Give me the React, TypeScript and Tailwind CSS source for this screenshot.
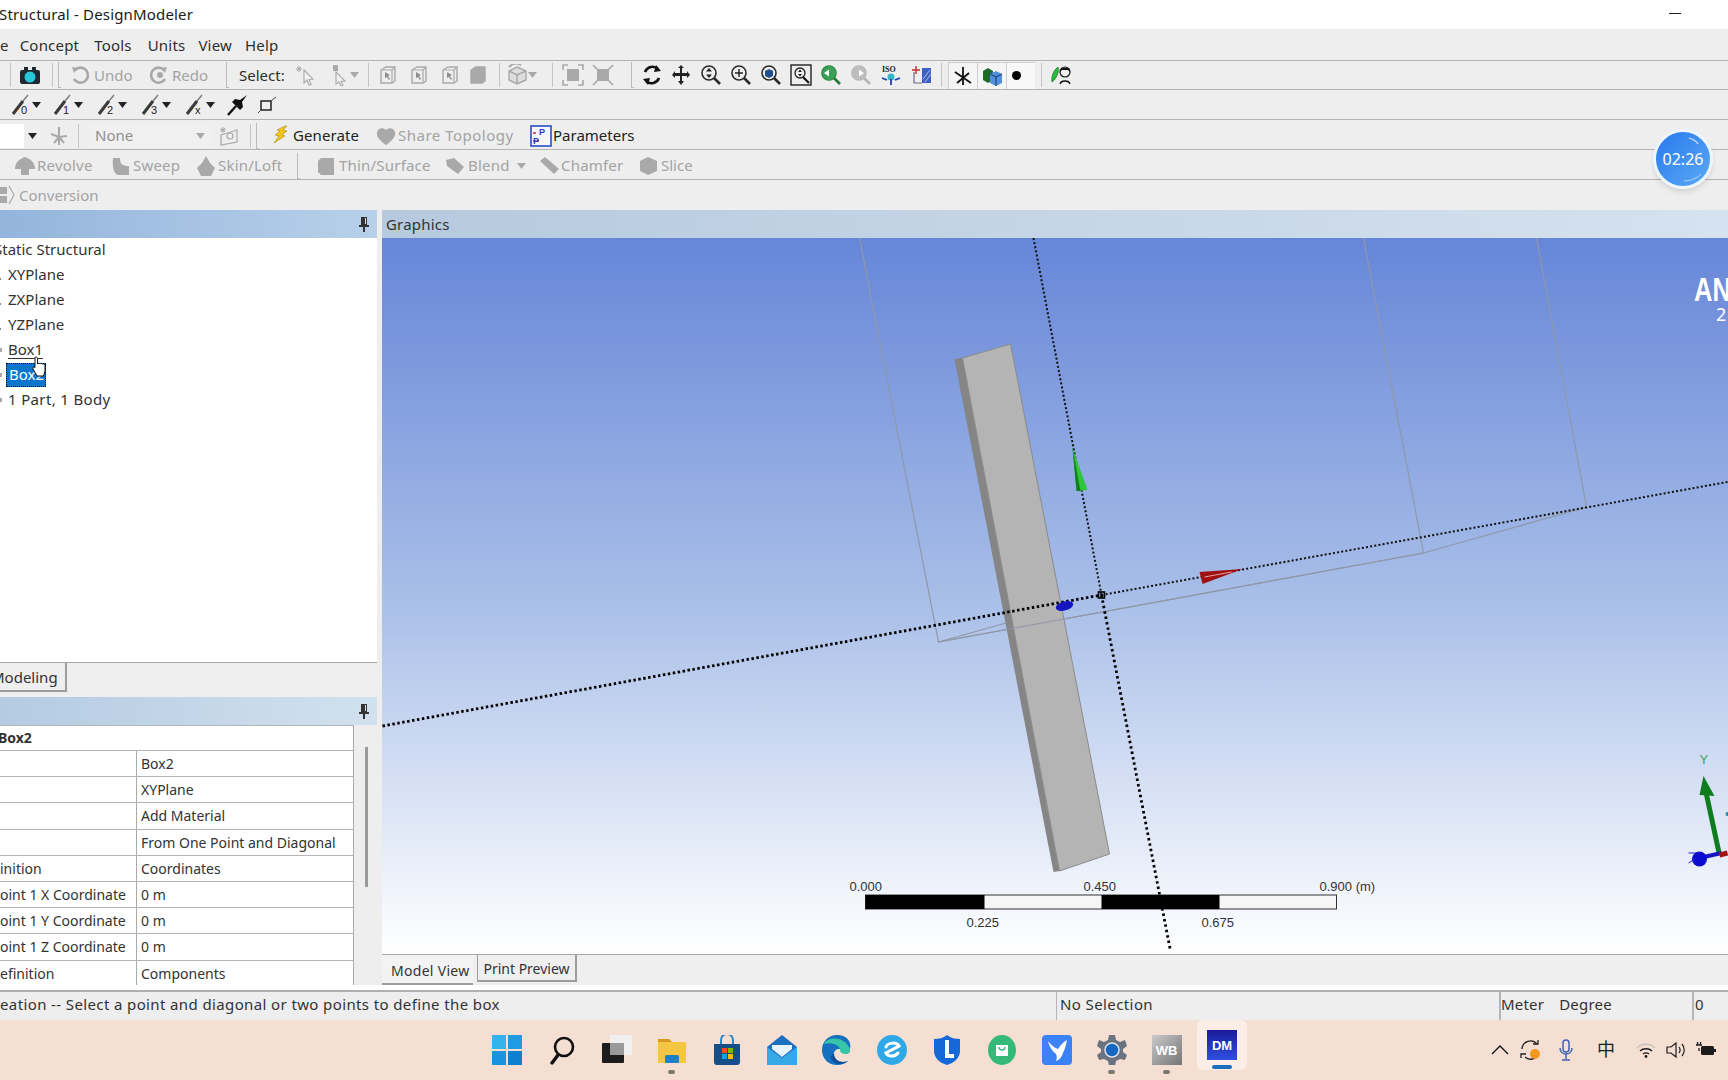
import type { ReactNode } from "react";

const GRAY = "#a9a9a9";
const DARK = "#2b2b2b";

const Cell = ({ className = "", children }: { className?: string; children: ReactNode }) => (
  <div className={"w-[22px] h-[22px] shrink-0 flex items-center justify-center " + className}>
    <svg width="22" height="22" viewBox="0 0 22 22" fill="none">
      {children}
    </svg>
  </div>
);

const Sep = ({ className = "" }: { className?: string }) => (
  <div className={"w-px h-[24px] shrink-0 bg-[#c4c4c4] " + className} />
);

const Grip = ({ className = "" }: { className?: string }) => (
  <div className={"w-[3px] h-[26px] shrink-0 border-l border-b border-[#bbbbbb] " + className} />
);

const Caret = ({ color = "#222222", className = "" }: { color?: string; className?: string }) => (
  <svg width="9" height="6" viewBox="0 0 9 6" className={"shrink-0 " + className}>
    <path d="M0 0h9L4.5 6z" fill={color} />
  </svg>
);

const Glass = ({ c = DARK, children }: { c?: string; children?: ReactNode }) => (
  <>
    <circle cx="9" cy="9" r="7" stroke={c} strokeWidth="1.6" />
    <path d="M14 14l6 6" stroke={c} strokeWidth="2.6" />
    {children}
  </>
);

const BoxSel = ({ fill = false }: { fill?: boolean }) => (
  <>
    <path d="M4 6l5-3h9v14l-3 2H4z" fill={fill ? GRAY : "none"} stroke={GRAY} strokeWidth="1.4" />
    {!fill && <path d="M4 6h11v13M15 6l3-3" stroke={GRAY} strokeWidth="1.2" />}
    {!fill && <path d="M8 8l5 3-2 1 2 3-1 1-2-3-2 1z" fill="#8d8d8d" />}
  </>
);

const Edge = ({ n, className = "" }: { n: string; className?: string }) => (
  <div className={"flex items-center shrink-0 " + className}>
    <svg width="22" height="22" viewBox="0 0 22 22">
      <path d="M3 20L13 7" stroke="#3a3a3a" strokeWidth="3" />
      <path d="M13 7l5-6" stroke="#777777" strokeWidth="1.3" />
      <text x="11" y="20" fontSize="11" fill="#222222" fontFamily="Liberation Sans, sans-serif">{n}</text>
    </svg>
    <Caret />
  </div>
);

const Label = ({ off, className = "", children }: { off?: boolean; className?: string; children: ReactNode }) => (
  <span className={"shrink-0 leading-none " + (off ? "text-[#a3a3a3] " : "text-[#2e2e2e] ") + className}>{children}</span>
);

const Bar = ({ className = "", children }: { className?: string; children?: ReactNode }) => (
  <div className={"flex items-center shrink-0 border-b border-[#b3b3b3] overflow-hidden " + className}>{children}</div>
);

const ToolRow1 = () => (
  <Bar className="h-[29px] border-t-0">
    <Sep className="ml-[10px]" />
    <Cell className="ml-[8px]">
      <rect x="1" y="6" width="20" height="14" rx="2" fill="#1c2a30" />
      <rect x="5" y="3" width="4" height="4" fill="#1c2a30" />
      <rect x="13" y="3" width="4" height="4" fill="#1c2a30" />
      <circle cx="11" cy="13" r="5.5" fill="#27c6d8" />
    </Cell>
    <Sep className="ml-[11px]" />
    <Grip className="ml-[5px]" />
    <Cell className="ml-[8px]">
      <path d="M6 6a7.5 7.5 0 1 1-1 9" stroke={GRAY} strokeWidth="2.6" />
      <path d="M3 3l6 1-4 5z" fill={GRAY} />
    </Cell>
    <Label off className="ml-[3px] w-[40px]">Undo</Label>
    <Cell className="ml-[14px]">
      <path d="M16 6a7.5 7.5 0 1 0 1 9" stroke={GRAY} strokeWidth="2.6" />
      <path d="M19 3l-6 1 4 5z" fill={GRAY} />
      <circle cx="12" cy="11" r="3" fill={GRAY} />
    </Cell>
    <Label off className="ml-[2px] w-[40px]">Redo</Label>
    <Grip className="ml-[14px]" />
    <Label className="ml-[10px] w-[47px] text-[#1f1f1f]">Select:</Label>
    <Cell className="ml-[9px]">
      <path d="M9 6l9 9-4 .5 2 5-2 .5-2-5-3 3z" stroke={GRAY} strokeWidth="1.1" fill="#f2f2f2" />
      <path d="M4 2v6M1 5h6M2 3l4 4M6 3l-4 4" stroke={GRAY} strokeWidth="1" />
    </Cell>
    <Cell className="ml-[11px]">
      <path d="M8 8l9 9-4 .5 2 4-2 .5-2-4-3 2z" stroke={GRAY} strokeWidth="1.1" fill="#f2f2f2" />
      <rect x="5" y="1" width="5" height="6" fill={GRAY} />
    </Cell>
    <Caret color={GRAY} />
    <Sep className="ml-[9px]" />
    <Cell className="ml-[8px]"><BoxSel /></Cell>
    <Cell className="ml-[9px]"><BoxSel /></Cell>
    <Cell className="ml-[9px]"><BoxSel /></Cell>
    <Cell className="ml-[6px]"><BoxSel fill /></Cell>
    <Sep className="ml-[10px]" />
    <Cell className="ml-[6px]">
      <path d="M11 3l9 4v9l-9 4-8-4V7z" stroke={GRAY} strokeWidth="1.4" fill="#dddddd" />
      <path d="M3 7l8 4 9-4M11 11v9" stroke={GRAY} strokeWidth="1.4" />
      <path d="M3 3a10 10 0 0 1 12-2" stroke={GRAY} strokeWidth="2" />
    </Cell>
    <Caret color={GRAY} />
    <Sep className="ml-[15px]" />
    <Cell className="ml-[9px]">
      <rect x="5" y="5" width="12" height="12" fill={GRAY} />
      <path d="M1 6V1h5M16 1h5v5M21 16v5h-5M6 21H1v-5" stroke={GRAY} strokeWidth="1.6" />
    </Cell>
    <Cell className="ml-[8px]">
      <rect x="5" y="5" width="12" height="12" fill={GRAY} />
      <path d="M1 1l5 5M21 1l-5 5M21 21l-5-5M1 21l5-5" stroke={GRAY} strokeWidth="1.6" />
    </Cell>
    <Grip className="ml-[17px]" />
    <Cell className="ml-[7px]">
      <path d="M4 8a8 8 0 0 1 13-3M18 14a8 8 0 0 1-13 3" stroke="#111111" strokeWidth="2.6" />
      <path d="M15 1l5 6-7 1zM7 21l-5-6 7-1z" fill="#111111" />
    </Cell>
    <div className="flex items-center gap-2 ml-[7px]">
      <Cell>
        <path d="M11 1l3 3h-2v5h5V7l3 4-3 3v-2h-5v5h2l-3 4-3-4h2v-5H5v2l-3-3 3-4v2h5V4H8z" fill="#222222" />
      </Cell>
      <Cell>
        <Glass><path d="M9 4l3 3.5H6zM9 14l3-3.5H6z" fill="#222222" /></Glass>
      </Cell>
      <Cell>
        <Glass><path d="M9 5v8M5 9h8" stroke="#222222" strokeWidth="1.4" /></Glass>
      </Cell>
      <Cell>
        <Glass><path d="M5 7l4-2 4 2v5l-4 2-4-2z" fill="#1f4f8f" /></Glass>
      </Cell>
      <Cell>
        <rect x="1" y="1" width="20" height="20" stroke="#111111" strokeWidth="1.3" />
        <circle cx="10" cy="9" r="5" stroke="#222222" strokeWidth="1.3" />
        <path d="M13 13l6 6" stroke="#111111" strokeWidth="2.2" />
        <path d="M10 5.5l2 2.5H8zM10 12.5l2-2.5H8z" fill="#222222" />
      </Cell>
      <Cell>
        <Glass c="#1f7a34">
          <circle cx="9" cy="9" r="7" fill="#3aa055" />
          <path d="M13 9H9V5.5L4 9l5 3.5V9z" fill="#ffffff" />
        </Glass>
      </Cell>
      <Cell>
        <Glass c="#b5b5b5">
          <circle cx="9" cy="9" r="7" fill="#bdbdbd" />
          <path d="M5 9h4V5.5L14 9l-5 3.5V9z" fill="#ffffff" />
        </Glass>
      </Cell>
      <Cell>
        <circle cx="11" cy="13" r="3.5" fill="#35b5c8" />
        <path d="M11 15v6M2 14l5 2M20 14l-5 2" stroke="#1f3fb0" strokeWidth="1.8" />
        <text x="2" y="8" fontSize="8" fontWeight="700" fill="#222222" fontFamily="Liberation Serif, serif">ISO</text>
      </Cell>
    </div>
    <Cell className="ml-[9px]">
      <path d="M11 4h9v15h-9z" fill="#3f5fc8" />
      <path d="M12 15l7-9M14 18l6-8" stroke="#a9bcf0" strokeWidth="1" />
      <path d="M3 8v11h8" stroke="#6a6a8a" strokeWidth="1.2" />
      <path d="M1 6h8M5 2v8" stroke="#c42a2a" strokeWidth="1.4" />
    </Cell>
    <Sep className="ml-[8px]" />
    <div className="flex ml-[6px]">
      <div className="w-[29px] h-[27px] flex items-center justify-center bg-[#f5f5f5] border-l border-t border-[#cfcfcf]">
        <Cell>
          <path d="M11 2v18M3 7l16 11M17 8L5 18" stroke="#111111" strokeWidth="1.8" />
        </Cell>
      </div>
      <div className="w-[29px] h-[27px] flex items-center justify-center bg-[#f5f5f5] border-l border-t border-[#cfcfcf]">
        <Cell>
          <path d="M2 6l5-3 5 3v9l-5 3-5-3z" fill="#1d6a2c" />
          <path d="M9 9l6-3 6 3v9l-6 3-6-3z" fill="#4f8fdb" />
          <path d="M9 9l6 3 6-3M15 12v9" stroke="#183a66" strokeWidth="1" />
        </Cell>
      </div>
      <div className="w-[29px] h-[27px] flex items-center justify-start pl-[5px] bg-[#f8f8f8] border-l border-t border-[#cfcfcf]">
        <div className="w-[9px] h-[9px] rounded-full bg-black" />
      </div>
    </div>
    <Sep className="ml-[6px]" />
    <Cell className="ml-[8px]">
      <path d="M2 18C1 12 4 6 8 3c1 5-1 11-6 15z" fill="#24c13c" stroke="#0e5c1a" strokeWidth=".7" />
      <circle cx="15" cy="8" r="5" fill="#f1f1f1" stroke="#111111" strokeWidth="1.2" />
      <path d="M10 8c0-5 10-6 10 0l-2-2h-6z" fill="#111111" />
      <path d="M10 20c1-4 9-4 10 0" stroke="#111111" strokeWidth="1.3" />
    </Cell>
  </Bar>
);

const ToolRow2 = () => (
  <Bar className="h-[30px]">
    <Edge n="0" className="ml-[10px] w-[40px]" />
    <Edge n="1" className="ml-[2px] w-[42px]" />
    <Edge n="2" className="ml-[2px] w-[42px]" />
    <Edge n="3" className="ml-[2px] w-[42px]" />
    <Edge n="x" className="ml-[2px] w-[42px]" />
    <Cell>
      <path d="M21 1l-7 5-5-1-3 3 8 8 3-3-1-5 5-7z" fill="#111111" />
      <path d="M10 12l-8 9" stroke="#111111" strokeWidth="2.4" />
    </Cell>
    <Cell className="ml-[8px]">
      <rect x="5" y="7" width="10" height="9" stroke="#222222" strokeWidth="1.5" />
      <path d="M15 7l5-4M5 16l-3 3" stroke="#444444" strokeWidth="1" />
    </Cell>
  </Bar>
);

const ToolRow3 = () => (
  <Bar className="h-[30px] pt-[2px]">
    <div className="w-[24px] h-[24px] bg-white shrink-0" />
    <Caret className="ml-[4px]" />
    <Cell className="ml-[11px]">
      <path d="M11 2v18M3 9l8 3 8-1M6 18l5-6M16 18l-5-6" stroke={GRAY} strokeWidth="2" />
    </Cell>
    <Sep className="ml-[8px]" />
    <div className="w-[120px] h-[24px] ml-[12px] shrink-0 flex items-center justify-between px-[4px] bg-[#f0f0f0]">
      <span className="text-[#8f8f8f] leading-none">None</span>
      <Caret color={GRAY} className="mr-[2px]" />
    </div>
    <Cell className="ml-[7px]">
      <path d="M3 10l16-5v12L3 20z" stroke={GRAY} strokeWidth="1.2" />
      <circle cx="12" cy="11" r="3" stroke={GRAY} strokeWidth="1.2" />
      <path d="M5 2v6M2 5h6M3 3l4 4M7 3L3 7" stroke={GRAY} strokeWidth="1" />
    </Cell>
    <Sep className="ml-[10px]" />
    <Grip className="ml-[5px]" />
    <Cell className="ml-[11px]">
      <path d="M15 1L7 5l3 1-5 4 4 1-5 7 11-7-3-1 5-4-4-1 4-4z" fill="#f3c515" stroke="#9a7d10" strokeWidth=".5" />
    </Cell>
    <Label className="ml-[1px] w-[67px] text-[#222222] tracking-[0.1px]">Generate</Label>
    <Cell className="ml-[15px]">
      <path d="M11 20C4 15 1 11 2 7c1-4 6-5 9-2 3-3 8-2 9 2 1 4-2 8-9 13z" fill={GRAY} />
    </Cell>
    <Label off className="ml-[1px] w-[116px] tracking-[0.5px]">Share Topology</Label>
    <Cell className="ml-[16px]">
      <rect x="1" y="1" width="20" height="20" fill="#f6f6ff" stroke="#2a4fc4" strokeWidth="1.6" />
      <path d="M3 8h3M3 16h6" stroke="#cc3322" strokeWidth="1.6" />
      <text x="9" y="10" fontSize="9" fontWeight="700" fill="#1d3fbb" fontFamily="Liberation Sans, sans-serif">P</text>
      <text x="3" y="19" fontSize="9" fontWeight="700" fill="#1d3fbb" fontFamily="Liberation Sans, sans-serif">P</text>
    </Cell>
    <Label className="ml-[1px] text-[#222222]">Parameters</Label>
  </Bar>
);

const ToolRow4 = () => (
  <Bar className="h-[30px] pt-[2px]">
    <Cell className="ml-[14px]">
      <path d="M11 2C5 4 1 8 1 14h6v6h8v-6h6c0-6-4-10-10-12z" fill={GRAY} />
    </Cell>
    <Label off className="ml-[1px] w-[57px] tracking-[0.2px]">Revolve</Label>
    <Cell className="ml-[16px]">
      <path d="M3 3h7c0 6 2 8 9 8v9H9C4 20 2 13 3 3z" fill={GRAY} />
    </Cell>
    <Label off className="ml-[1px] w-[47px] tracking-[0.2px]">Sweep</Label>
    <Cell className="ml-[15px]">
      <path d="M11 1l4 7 5 5-4 8H6l-4-8 5-5z" fill={GRAY} />
    </Cell>
    <Label off className="w-[63px] ml-[1px] tracking-[0.2px]">Skin/Loft</Label>
    <Grip className="ml-[16px]" />
    <Cell className="ml-[15px]">
      <path d="M3 6l3-3h13v17H6l-3-3z" fill={GRAY} />
    </Cell>
    <Label off className="ml-[2px] w-[88px] tracking-[0.2px]">Thin/Surface</Label>
    <Cell className="ml-[17px]">
      <path d="M2 5l8-2 10 9-6 7L3 11z" fill={GRAY} />
    </Cell>
    <Label off className="ml-[2px] w-[40px] tracking-[0.2px]">Blend</Label>
    <Caret color={GRAY} className="ml-[9px]" />
    <Cell className="ml-[12px]">
      <path d="M2 6l5-4 14 12-5 5z" fill={GRAY} />
    </Cell>
    <Label off className="ml-[1px] w-[61px] tracking-[0.2px]">Chamfer</Label>
    <Cell className="ml-[15px]">
      <path d="M3 6l8-4 9 4v10l-9 4-8-4z" fill={GRAY} />
    </Cell>
    <Label off className="ml-[2px]">Slice</Label>
  </Bar>
);

const ToolRow5 = () => (
  <div className="h-[30px] shrink-0 flex items-center">
    <svg width="16" height="22" viewBox="0 0 16 22" className="shrink-0">
      <rect x="0" y="3" width="7" height="7" fill={GRAY} />
      <rect x="0" y="12" width="7" height="7" fill={GRAY} />
      <path d="M9 2l5 9-5 9" stroke={GRAY} strokeWidth="1.2" fill="none" />
    </svg>
    <Label off className="ml-[3px]">Conversion</Label>
  </div>
);

const Pin = () => (
  <svg width="10" height="16" viewBox="0 0 10 16" className="shrink-0">
    <path d="M2 1h6v8h2v2H6v5H4v-5H0V9h2z" fill="#333333" />
    <path d="M6 2h1v6H6z" fill="#dddddd" />
  </svg>
);

const treeRows = ["XYPlane", "ZXPlane", "YZPlane"];

const Tree = () => (
  <div className="relative flex-1 bg-white text-[15px] text-[#333333] -mt-[1px]">
    <div className="h-[25px] flex items-center -ml-[6px]">Static Structural</div>
    {treeRows.map((r) => (
      <div key={r} className="h-[25px] flex items-center">
        <span className="w-[1px] h-[2px] mt-[8px] mr-[7px] bg-[#888888]" />
        {r}
      </div>
    ))}
    <div className="h-[25px] flex items-center">
      <span className="w-[2px] h-[4px] mr-[6px] bg-[#aaaaaa]" />
      <span className="underline underline-offset-[3px]">Box1</span>
    </div>
    <div className="h-[25px] flex items-center">
      <span className="w-[2px] h-[4px] mr-[4px] bg-[#aaaaaa]" />
      <span className="h-[24px] w-[40px] pl-[2px] flex items-center bg-[#0a76d0] text-white border border-dotted border-[#111111]">Box2</span>
    </div>
    <div className="h-[25px] flex items-center">
      <span className="w-[2px] h-[4px] mr-[6px] bg-[#aaaaaa]" />
      <span className="tracking-[0.35px]">1 Part, 1 Body</span>
    </div>
    <svg width="16" height="22" viewBox="0 0 16 22" className="absolute left-[32px] top-[119px]">
      <path d="M3 1.500c1-1 2.500-.5 2.500 1V8c.5-1 2.200-1 2.500 0 .5-1 2.200-1 2.500.2.7-.6 2.500-.4 2.500 1V15l-1.500 5H5L1 13c-.8-1.500 1-2.600 2-1.500V2z" fill="#ffffff" stroke="#111111" strokeWidth="1" />
    </svg>
  </div>
);

const details: [string, string][] = [
  ["", "Box2"],
  ["", "XYPlane"],
  ["", "Add Material"],
  ["", "From One Point and Diagonal"],
  ["inition", "Coordinates"],
  ["oint 1 X Coordinate", "0 m"],
  ["oint 1 Y Coordinate", "0 m"],
  ["oint 1 Z Coordinate", "0 m"],
  ["efinition", "Components"],
];

const Details = () => (
  <div className="h-[260px] flex shrink-0">
    <div className="w-[354px] bg-white overflow-hidden text-[14px] text-[#333333] border-r border-[#a9a9a9]">
      <div className="h-[26px] pb-[2px] flex items-center font-bold border-b border-[#b5b5b5] border-t -ml-[2px]">Box2</div>
      {details.map(([k, v]) => (
        <div key={v + k} className="h-[26.2px] flex items-center border-b border-[#b5b5b5]">
          <div className="w-[137px] h-full flex items-center border-r border-[#a9a9a9] shrink-0">{k}</div>
          <div className="pl-[4px]">{v}</div>
        </div>
      ))}
    </div>
    <div className="w-[23px] flex justify-center pt-[22px] pl-[2px]">
      <div className="w-[3px] h-[140px] bg-[#9a9a9a]" />
    </div>
  </div>
);

const LeftPanel = () => (
  <div className="w-[377px] shrink-0 flex flex-col">
    <div className="relative z-10 h-[28px] shrink-0 flex items-center justify-end pr-[8px] bg-[linear-gradient(90deg,#93b5dc,#b8d0ea)]">
      <Pin />
    </div>
    <Tree />
    <div className="h-[35px] shrink-0 border-t border-[#a8a8a8] bg-[#efefef]">
      <div className="h-[29px] w-[67px] pt-[2px] flex items-center bg-[#efefef] border-r-2 border-b-2 border-[#9c9c9c] text-[15px] text-[#333333] overflow-hidden">
        <span className="-ml-[9px]">Modeling</span>
      </div>
    </div>
    <div className="h-[28px] shrink-0 flex items-center justify-end pr-[8px] bg-[linear-gradient(90deg,#b4cbe2,#d2e1ef)]">
      <Pin />
    </div>
    <Details />
  </div>
);

const Viewport = () => (
  <div className="relative flex-1 overflow-hidden bg-[linear-gradient(180deg,#6686d8_0%,#a8bee8_50%,#ffffff_100%)]">
    <svg viewBox="383 238 1345 716" className="absolute inset-0 w-full h-full">
      <g stroke="#8f98a8" strokeWidth="1.2" fill="none">
        <path d="M860 238L939 642L1424 553L1364 238" />
        <path d="M1424 553L1587 507L1537 238" />
        <path d="M939 642L1010 622" />
      </g>
      <path d="M955 359L963 358L1060 871L1054 872z" fill="#858585" />
      <path d="M963 358L1011 344L1110 854L1060 871z" fill="#b4b4b4" stroke="#8b8b8b" strokeWidth="1" />
      <path d="M939 642L1424 553" stroke="#8f98a8" strokeWidth="1" />
      <path d="M383 726L1102 595" stroke="#000000" strokeWidth="2.8" strokeDasharray="2.5 2.5" />
      <path d="M1102 595L1728 482" stroke="#111111" strokeWidth="2" strokeDasharray="2 2.2" />
      <path d="M1034 238L1102 595" stroke="#111111" strokeWidth="2" strokeDasharray="2 2.2" />
      <path d="M1102 595L1171 951" stroke="#000000" strokeWidth="2.8" strokeDasharray="2.5 3" />
      <rect x="1099" y="592" width="6" height="6" fill="none" stroke="#000000" strokeWidth="1.6" />
      <path d="M1073 448L1088 490L1077 491z" fill="#2fc63a" />
      <path d="M1073 448L1077 491L1081 491z" fill="#11801c" />
      <path d="M1200 572L1243 569L1203 584z" fill="#a01010" />
      <path d="M1205 577L1232 572" stroke="#e2a0a0" strokeWidth="1" />
      <ellipse cx="1065" cy="606" rx="9" ry="4.5" fill="#1616c0" transform="rotate(-15 1065 606)" />
      <rect x="866" y="895" width="471" height="14" fill="#f6f6f6" stroke="#333333" strokeWidth="1" />
      <rect x="866" y="895" width="119" height="14" fill="#000000" />
      <rect x="1102" y="895" width="118" height="14" fill="#000000" />
      <g fontFamily="Liberation Sans, sans-serif" fontSize="13" fill="#333333">
        <text x="850" y="891">0.000</text>
        <text x="1084" y="891">0.450</text>
        <text x="1320" y="891">0.900 (m)</text>
        <text x="967" y="927">0.225</text>
        <text x="1202" y="927">0.675</text>
      </g>
      <text x="1700" y="764" fontFamily="Liberation Sans, sans-serif" fontSize="13" fill="#3aa85a">Y</text>
      <path d="M1704 776L1715 796L1700 795z" fill="#0e7d1e" />
      <path d="M1706 790L1720 855" stroke="#0e7d1e" strokeWidth="5" />
      <path d="M1700 858l22-5" stroke="#1414c8" strokeWidth="4" />
      <path d="M1720 855l8-2" stroke="#a01414" strokeWidth="5" />
      <circle cx="1700" cy="859" r="7.5" fill="#0b0bd0" />
      <path d="M1689 853h11M1689 863l8-5" stroke="#2222c8" strokeWidth="1" />
      <circle cx="1728" cy="814" r="2" fill="#2a8a9a" />
    </svg>
    <div className="absolute left-[1312px] top-[36px] h-[30px] text-[34px] leading-[30px] font-bold text-white origin-left scale-x-75 font-['Liberation_Sans',sans-serif]">AN</div>
    <div className="absolute left-[1334px] top-[67px] text-[18px] leading-none text-white">2</div>
  </div>
);

const GraphicsPanel = () => (
  <div className="flex-1 min-w-0 flex flex-col">
    <div className="h-[28px] shrink-0 flex items-center pl-[4px] text-[15px] text-[#333333] tracking-[0.2px] bg-[linear-gradient(90deg,#b6c9de,#d5e2ef)]">
      Graphics
    </div>
    <Viewport />
    <div className="h-[31px] shrink-0 border-t border-[#a8a8a8] flex items-start bg-[#efefef] text-[14px] text-[#333333]">
      <div className="h-[30px] w-[91px] pt-[2px] pl-[9px] flex items-center border-b-2 border-[#9c9c9c] bg-[#f3f3f3] tracking-[0.3px]">Model View</div>
      <div className="h-[27px] w-[100px] ml-[4px] pt-[1px] flex items-center justify-center border border-t-0 border-[#9c9c9c] border-b-2 border-r-2 bg-[#efefef]">Print Preview</div>
    </div>
  </div>
);

const StatusBar = () => (
  <div className="h-[30px] shrink-0 flex items-center border-t-2 border-[#b0b0b0] text-[15px] text-[#333333]">
    <div className="w-[1056px] pb-[3px] overflow-hidden whitespace-nowrap tracking-[0.38px]">eation -- Select a point and diagonal or two points to define the box</div>
    <div className="w-[443px] h-full pb-[3px] flex items-center pl-[3px] border-l border-[#b5b5b5] tracking-[0.4px]">No Selection</div>
    <div className="w-[193px] h-full pb-[3px] flex items-center gap-[15px] border-l-2 border-[#b5b5b5] tracking-[0.2px]">
      <span>Meter</span>
      <span>Degree</span>
    </div>
    <div className="flex-1 h-full pb-[3px] flex items-center pl-[1px] border-l-2 border-[#b5b5b5]">0</div>
  </div>
);

const Tile = ({ children, dot }: { children: ReactNode; dot?: boolean }) => (
  <div className="relative w-[55px] h-[60px] shrink-0 flex items-center justify-center">
    <svg width="30" height="30" viewBox="0 0 30 30" fill="none">
      {children}
    </svg>
    {dot && <div className="absolute bottom-[6px] left-[24px] w-[7px] h-[4px] rounded-full bg-[#7c7670]" />}
  </div>
);

const Taskbar = () => (
  <div className="h-[60px] shrink-0 flex items-center bg-[#f4dfd2]">
    <div className="flex ml-[479px]">
      <Tile>
        <rect x="0" y="0" width="14" height="14" fill="#34b4ee" />
        <rect x="16" y="0" width="14" height="14" fill="#1f9be4" />
        <rect x="0" y="16" width="14" height="14" fill="#1a93df" />
        <rect x="16" y="16" width="14" height="14" fill="#0f7fd0" />
      </Tile>
      <Tile>
        <circle cx="17" cy="12" r="9" stroke="#111111" strokeWidth="2.6" />
        <path d="M11 20l-6 8" stroke="#111111" strokeWidth="3.4" strokeLinecap="round" />
      </Tile>
      <Tile>
        <rect x="0" y="8" width="22" height="20" rx="1" fill="#1c1c1c" />
        <rect x="8" y="0" width="22" height="20" rx="1" fill="#f0f0f0" />
        <rect x="8" y="8" width="14" height="12" fill="#9a9a9a" />
      </Tile>
      <Tile dot>
        <path d="M1 4h11l3 3h14v21H1z" fill="#f4c642" />
        <path d="M1 4h11l3 3H1z" fill="#d79a1d" />
        <rect x="8" y="20" width="14" height="8" rx="1.5" fill="#1e7fc4" />
      </Tile>
      <Tile>
        <path d="M2 9h26v18a3 3 0 0 1-3 3H5a3 3 0 0 1-3-3z" fill="#154f86" />
        <path d="M9 9V5a6 6 0 0 1 12 0v4" stroke="#2b86c8" strokeWidth="2" />
        <rect x="10" y="13" width="5" height="5" fill="#f25022" />
        <rect x="16" y="13" width="5" height="5" fill="#7fba00" />
        <rect x="10" y="19" width="5" height="5" fill="#00a4ef" />
        <rect x="16" y="19" width="5" height="5" fill="#ffb900" />
      </Tile>
      <Tile>
        <path d="M0 12L15 0l15 12v18H0z" fill="#1d6fc0" />
        <path d="M5 10h20v4l-10 8-10-8z" fill="#e8f2fb" />
        <path d="M0 12l15 11 15-11v18H0z" fill="#35a8e8" />
      </Tile>
      <Tile>
        <path d="M15 0C6 0 0 7 0 15c0 9 7 15 15 15 5 0 9-2 11-4-7 3-14-1-14-7 0-3 2-5 5-5h11C30 6 24 0 15 0z" fill="#1570c0" />
        <path d="M2 9c3-7 20-9 26 5 .6 3-1 5-4 5-3 0-6-1-6-4 0-6-11-8-16-6z" fill="#36c5a8" />
        <path d="M12 19c0 6 7 10 14 7-5 4-12 4-16-1-2-2-2-5 2-6z" fill="#0e4f96" />
      </Tile>
      <Tile>
        <circle cx="15" cy="15" r="15" fill="#2ea8e6" />
        <path d="M9 12c2-5 11-5 13-1L9 18c2 4 9 4 12 0" stroke="#ffffff" strokeWidth="3" strokeLinecap="round" />
      </Tile>
      <Tile>
        <path d="M15 0c4 3 8 4 13 4v12c0 7-6 12-13 14C8 28 2 23 2 16V4c5 0 9-1 13-4z" fill="#1468d8" />
        <path d="M13 5h4v14h5v4h-9z" fill="#ffffff" />
      </Tile>
      <Tile>
        <ellipse cx="15" cy="15" rx="14" ry="15" fill="#35b97b" />
        <path d="M9 10h12v11H9z" fill="#ffffff" />
        <path d="M12 12c0 4 6 4 6 0" stroke="#35b97b" strokeWidth="1.3" />
      </Tile>
      <Tile>
        <rect x="0" y="0" width="30" height="30" rx="4" fill="#3b82f6" />
        <path d="M6 6c4 5 7 7 10 8 2-3 5-7 9-9-1 5-2 9-4 13-1 4-4 7-7 8 1-3 1-5 0-7C10 16 7 11 6 6z" fill="#ffffff" />
      </Tile>
      <Tile dot>
        <path d="M12 0h6l1 5 4 2 5-2 2 6-4 3v3l4 3-2 5-5-1-4 2-1 5h-6l-1-5-4-2-5 1-2-5 4-3v-3L0 11l2-6 5 2 4-2z" fill="#6b7280" />
        <circle cx="15" cy="15" r="7" fill="#1668c0" stroke="#dfe4ea" strokeWidth="1.5" />
      </Tile>
      <div className="relative w-[55px] h-[60px] shrink-0 flex items-center justify-center">
        <div className="w-[30px] h-[30px] flex items-center justify-center bg-[linear-gradient(135deg,#c9c9c9,#757575)] text-white font-bold text-[13px] leading-none font-['Liberation_Sans',sans-serif]">WB</div>
        <div className="absolute bottom-[6px] left-[24px] w-[7px] h-[4px] rounded-full bg-[#7c7670]" />
      </div>
      <div className="relative w-[50px] h-[50px] ml-[3px] shrink-0 flex items-center justify-center rounded-md bg-[#fbeee6]">
        <div className="w-[30px] h-[30px] flex items-center justify-center bg-[linear-gradient(180deg,#1a1a9a,#2f4fe0)] text-white font-bold text-[13px] leading-none font-['Liberation_Sans',sans-serif]">DM</div>
        <div className="absolute bottom-[1px] left-[15px] w-[20px] h-[4px] rounded-full bg-[#1a6fc0]" />
      </div>
    </div>
    <div className="flex items-center ml-[244px] relative h-full">
      <svg width="18" height="12" viewBox="0 0 18 12" fill="none" className="absolute left-[0px] top-[24px]">
        <path d="M1 10l8-8 8 8" stroke="#111111" strokeWidth="1.3" />
      </svg>
      <svg width="22" height="22" viewBox="0 0 22 22" fill="none" className="absolute left-[29px] top-[19px]">
        <path d="M2 10a8.5 8.5 0 0 1 15-5M18 15a8 8 0 0 1-13 3" stroke="#222222" strokeWidth="1.3" />
        <path d="M13 5h5V1M1 19v-4h5" stroke="#222222" strokeWidth="1.3" />
        <circle cx="15" cy="15" r="5" fill="#f39a1e" />
      </svg>
      <svg width="16" height="22" viewBox="0 0 16 22" fill="none" className="absolute left-[67px] top-[19px]">
        <rect x="5" y="1" width="6" height="12" rx="3" stroke="#3f63b5" strokeWidth="1.5" />
        <path d="M2 9c0 8 12 8 12 0M8 15v5M4 21h8" stroke="#3f63b5" strokeWidth="1.5" />
      </svg>
      <span className="absolute left-[106px] top-[19px] text-[18px] leading-none text-[#1c1c1c] font-['Noto_Sans_CJK_SC',sans-serif]">中</span>
      <svg width="20" height="16" viewBox="0 0 20 16" fill="none" className="absolute left-[145px] top-[22px]">
        <path d="M1 6c5-5 13-5 18 0" stroke="#c9c2bc" strokeWidth="1.3" />
        <path d="M4 9c3-3 9-3 12 0M7 12c2-1.5 4-1.5 6 0" stroke="#1c1c1c" strokeWidth="1.3" />
        <circle cx="10" cy="14.5" r="1.4" fill="#1c1c1c" />
      </svg>
      <svg width="22" height="18" viewBox="0 0 22 18" fill="none" className="absolute left-[175px] top-[21px]">
        <path d="M1 6h4l5-4v14l-5-4H1z" stroke="#1c1c1c" strokeWidth="1.2" />
        <path d="M13 6c1.5 2 1.5 4 0 6M16 3c3 3.5 3 8.5 0 12" stroke="#1c1c1c" strokeWidth="1.2" />
      </svg>
      <svg width="22" height="16" viewBox="0 0 22 16" fill="none" className="absolute left-[204px] top-[22px]">
        <rect x="6" y="4" width="13" height="9" rx="1.5" fill="#1c1c1c" />
        <rect x="19" y="7" width="2" height="3" fill="#1c1c1c" />
        <path d="M1 3h6M2.5 0v3M5.5 0v3M4 6v3" stroke="#1c1c1c" strokeWidth="1.3" />
      </svg>
    </div>
  </div>
);

export default function App() {
  return (
    <div className="relative w-[1728px] h-[1080px] flex flex-col overflow-hidden bg-[#eeeeee] text-[15px] font-['Noto_Sans',sans-serif]">
      <div className="relative h-[29px] shrink-0 flex items-center bg-white text-[15px] text-[#1a1a1a] tracking-[0.17px]">
        <span className="-ml-[1px]">Structural - DesignModeler</span>
        <div className="absolute left-[1669px] top-[13px] w-[12px] h-px bg-[#222222]" />
      </div>
      <div className="h-[32px] pt-[2px] shrink-0 flex items-center border-b border-[#b3b3b3] text-[#2e2e2e] tracking-[0.2px]">
        <span>e</span>
        <span className="ml-[11px]">Concept</span>
        <span className="ml-[15px]">Tools</span>
        <span className="ml-[16px]">Units</span>
        <span className="ml-[13px]">View</span>
        <span className="ml-[13px]">Help</span>
      </div>
      <ToolRow1 />
      <ToolRow2 />
      <ToolRow3 />
      <ToolRow4 />
      <ToolRow5 />
      <div className="flex-1 min-h-0 flex gap-[5px]">
        <LeftPanel />
        <GraphicsPanel />
      </div>
      <div className="h-[5px] shrink-0 bg-white" />
      <StatusBar />
      <Taskbar />
      <div className="absolute left-[1653px] top-[129px] w-[60px] h-[60px] rounded-full border-[3px] border-[#eef6fd] shadow-md flex items-center justify-center bg-[linear-gradient(135deg,#2a78ee,#59aaf6)] text-white text-[16px] leading-none">
        02:26
        <svg width="54" height="54" viewBox="0 0 54 54" fill="none" className="absolute inset-0">
          <path d="M33 6c4 1 7 3 9 6" stroke="#cfe4fc" strokeWidth="1.2" />
          <path d="M28 49c6 0 12-2 17-7" stroke="#a8d4fb" strokeWidth="1" />
        </svg>
      </div>
    </div>
  );
}
